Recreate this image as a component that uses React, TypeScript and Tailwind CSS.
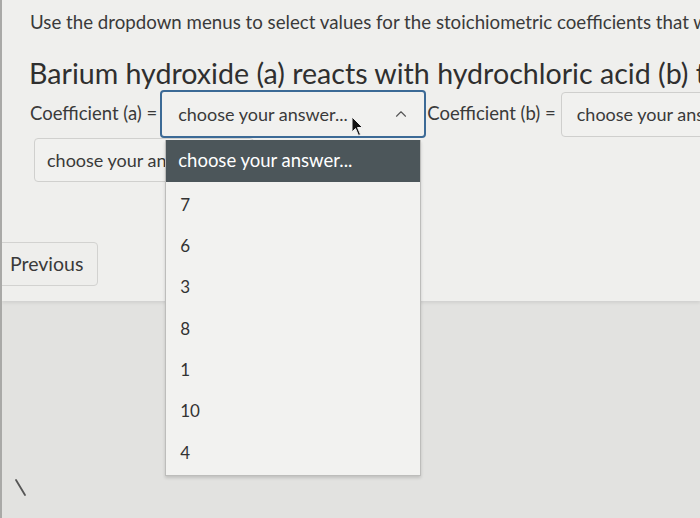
import { ChevronUp } from "lucide-react";

const options = ["7", "6", "3", "8", "1", "10", "4"];

function Pointer() {
  return (
    <svg width="14" height="22" viewBox="0 0 14 22" className="absolute left-[349px] top-[116px]">
      <path d="M1 1 L1 16 L4.5 12.5 L7.5 19.5 L9.5 18.5 L6.5 11.5 L11.5 11.5 Z" fill="#111" stroke="#eee" strokeWidth="1" />
    </svg>
  );
}

export default function App() {
  return (
    <div
      className="relative flex h-[518px] w-[700px] flex-col overflow-hidden border-l-2 border-[#a9a9a7] bg-[#e2e2e0] text-[#3a3a3a]"
      style={{ fontFamily: "Lato, 'Open Sans', sans-serif" }}
    >
      <div className="absolute left-0 top-0 h-[4px] w-[20px] bg-[#3a3a3a]" />

      <div className="relative flex h-[301px] shrink-0 flex-col bg-[#efefed] pt-[10px] shadow-[0_2px_3px_rgba(0,0,0,0.08)]">
        <p className="whitespace-nowrap pl-[28px] text-[18.7px] leading-[24px]">
          Use the dropdown menus to select values for the stoichiometric coefficients that would
        </p>
        <h2 className="mt-[23px] whitespace-nowrap pl-[27px] text-[28.6px] leading-[33px] text-[#2f2f2f]">
          Barium hydroxide (a) reacts with hydrochloric acid (b) to form
        </h2>

        <div className="flex h-[48px] items-center whitespace-nowrap pl-[28px] text-[18px]">
          <span className="text-[18.5px]">Coefficient (a) =</span>
          <div className="relative ml-[3px] h-[48px] w-[266px] shrink-0">
            <div className="flex h-full items-center justify-between rounded-[4px] border-2 border-[#3c6a96] bg-[#f1f1ef] pl-[16px] pr-[14px]">
              <span>choose your answer...</span>
              <ChevronUp size={18} strokeWidth={1.5} className="text-[#555]" />
            </div>
            <div className="absolute left-[5px] top-[50px] z-10 w-[256px] border border-t-0 border-[#bdbdbb] bg-[#f2f2f0] pb-[2px] shadow-[0_2px_3px_rgba(0,0,0,0.15)]">
              <div className="flex h-[42px] items-center bg-[#4c565a] pl-[12px] text-[18.5px] text-white">
                choose your answer...
              </div>
              <div className="pt-[2px]">
                {options.map((o) => (
                  <div key={o} className="flex h-[41.3px] items-center pl-[14px] text-[17px] text-[#333]">
                    {o}
                  </div>
                ))}
              </div>
            </div>
          </div>
          <span className="ml-[1px] text-[18.5px]">Coefficient (b) =</span>
          <div className="ml-[5px] flex h-[45px] w-[200px] shrink-0 items-center rounded-[4px] border border-[#cfcfcd] bg-[#f1f1ef] pl-[15px]">
            choose your answer...
          </div>
        </div>

        <div className="flex h-[44px] pl-[32px]">
          <div className="flex w-[220px] items-center whitespace-nowrap rounded-[4px] border border-[#d0d0ce] bg-[#f1f1ef] pl-[12px] text-[18px]">
            choose your answer...
          </div>
        </div>

        <div className="mt-[60px] flex">
          <button className="ml-[-10px] flex h-[44px] w-[106px] items-center rounded-[4px] border border-[#d2d2d0] bg-[#eeeeec] pl-[17px] text-[19.5px] text-[#3a3a3a]">
            Previous
          </button>
        </div>
      </div>

      <div className="flex-1" />

      <Pointer />
      <svg width="14" height="20" viewBox="0 0 14 20" className="absolute left-[12px] top-[478px]">
        <path d="M2 2 L11 17" stroke="#555" strokeWidth="1.8" strokeLinecap="round" />
      </svg>
    </div>
  );
}
